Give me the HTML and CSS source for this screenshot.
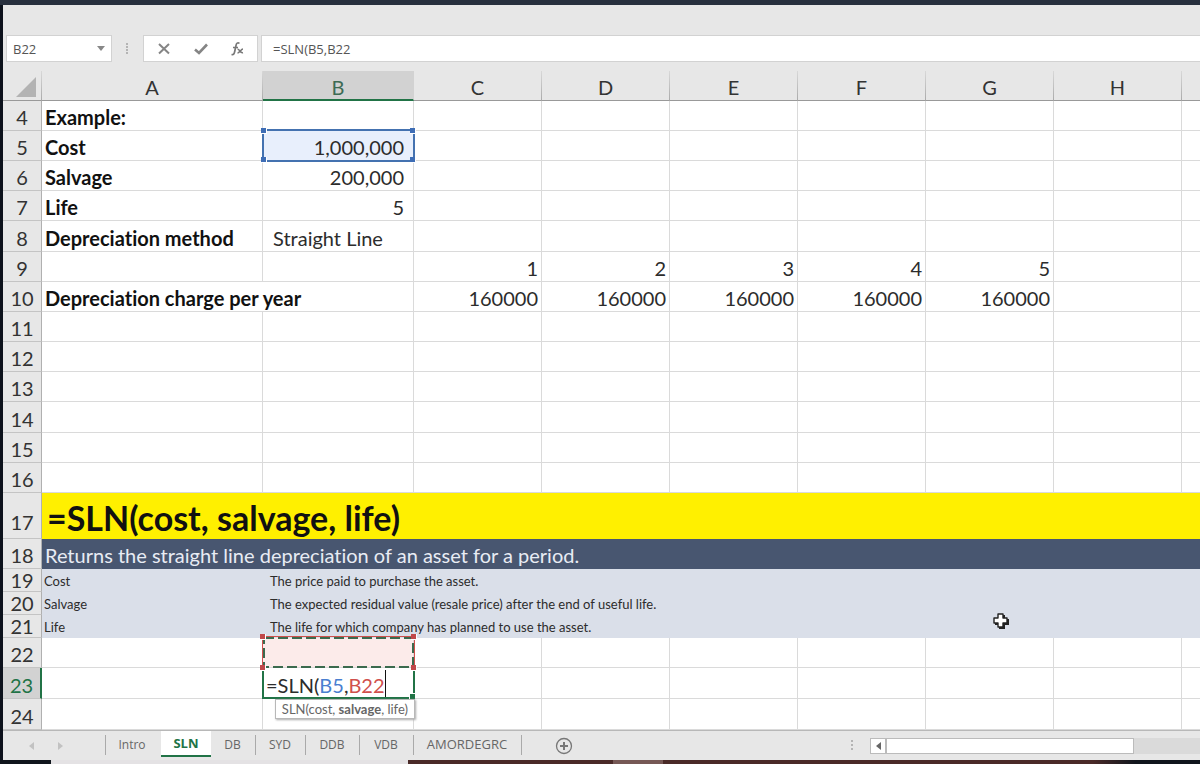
FILE: index.html
```html
<!DOCTYPE html>
<html lang="en">
<head>
<meta charset="utf-8">
<title>SLN worksheet</title>
<link rel="stylesheet" href="styles.css">
</head>
<body>
<div class="app">
  <header class="formula-row">
    <div class="name-box">
      <input class="name-input" type="text" value="B22" aria-label="Name box">
      <button class="name-toggle" type="button" aria-label="Show names"><svg width="8" height="5" viewBox="0 0 8 5"><path d="M0 0h8L4 5z" fill="#888"/></svg></button>
    </div>
    <svg class="grip" width="3" height="12" viewBox="0 0 3 12"><path d="M0 0h2v2H0zM0 3h2v2H0zM0 6h2v2H0zM0 9h2v2H0z" fill="#b4b4b4"/></svg>
    <div class="formula-tools">
      <button type="button" aria-label="Cancel"><svg width="14" height="14" viewBox="0 0 14 14"><path d="M2 2l10 9.500M12 2L2 11.500" stroke="#858585" stroke-width="2" fill="none"/></svg></button>
      <button type="button" aria-label="Enter"><svg width="16" height="14" viewBox="0 0 16 14"><path d="M2 7.500l4 3.500L14 2.500" stroke="#858585" stroke-width="2.600" fill="none"/></svg></button>
      <button type="button" aria-label="Insert function"><svg width="16" height="16" viewBox="0 0 16 16" fill="none" stroke="#777"><path d="M1.500 13.500c2 .5 2.700-.5 3.200-3L6 4.500C6.500 2 7.500 1.500 9.500 2.200M3 6.500h5" stroke-width="1.700"/><path d="M7.500 8.200c2-.7 2.500 4.300 5.500 3.500M13 8c-2 0-3.500 3.900-5.500 3.900" stroke-width="1.500"/></svg></button>
    </div>
    <input class="formula-input" type="text" value="=SLN(B5,B22" aria-label="Formula bar">
  </header>

  <main class="sheet">
    <table class="grid">
      <colgroup><col class="col-num"><col class="col-a"><col class="col-b"><col class="col-n"><col class="col-n"><col class="col-n"><col class="col-n"><col class="col-n"><col class="col-n"><col></colgroup>
      <thead>
        <tr><th class="corner"><svg width="22" height="22" viewBox="0 0 22 22"><path d="M21 1v20H1z" fill="#b3b3b3"/></svg></th><th>A</th><th class="current">B</th><th>C</th><th>D</th><th>E</th><th>F</th><th>G</th><th>H</th><th></th></tr>
      </thead>
      <tbody>
        <tr><th>4</th><td class="bold">Example:</td><td></td><td></td><td></td><td></td><td></td><td></td><td></td><td></td></tr>
        <tr><th>5</th><td class="bold">Cost</td><td class="money ref-blue">1,000,000<span class="frame frame-blue"><i></i><i></i><i></i><i></i></span></td><td></td><td></td><td></td><td></td><td></td><td></td><td></td></tr>
        <tr><th>6</th><td class="bold">Salvage</td><td class="money">200,000</td><td></td><td></td><td></td><td></td><td></td><td></td><td></td></tr>
        <tr><th>7</th><td class="bold">Life</td><td class="money">5</td><td></td><td></td><td></td><td></td><td></td><td></td><td></td></tr>
        <tr class="tall"><th>8</th><td class="bold">Depreciation method</td><td class="indent">Straight Line</td><td></td><td></td><td></td><td></td><td></td><td></td><td></td></tr>
        <tr><th>9</th><td></td><td></td><td class="num">1</td><td class="num">2</td><td class="num">3</td><td class="num">4</td><td class="num">5</td><td></td><td></td></tr>
        <tr><th>10</th><td class="bold" colspan="2">Depreciation charge per year</td><td class="num">160000</td><td class="num">160000</td><td class="num">160000</td><td class="num">160000</td><td class="num">160000</td><td></td><td></td></tr>
        <tr><th>11</th><td></td><td></td><td></td><td></td><td></td><td></td><td></td><td></td><td></td></tr>
        <tr><th>12</th><td></td><td></td><td></td><td></td><td></td><td></td><td></td><td></td><td></td></tr>
        <tr><th>13</th><td></td><td></td><td></td><td></td><td></td><td></td><td></td><td></td><td></td></tr>
        <tr class="tall"><th>14</th><td></td><td></td><td></td><td></td><td></td><td></td><td></td><td></td><td></td></tr>
        <tr><th>15</th><td></td><td></td><td></td><td></td><td></td><td></td><td></td><td></td><td></td></tr>
        <tr><th>16</th><td></td><td></td><td></td><td></td><td></td><td></td><td></td><td></td><td></td></tr>
        <tr class="banner"><th>17</th><td colspan="9">=SLN(cost, salvage, life)</td></tr>
        <tr class="summary"><th>18</th><td colspan="9">Returns the straight line depreciation of an asset for a period.</td></tr>
        <tr class="note"><th>19</th><td>Cost</td><td colspan="8">The price paid to purchase the asset.</td></tr>
        <tr class="note"><th>20</th><td>Salvage</td><td colspan="8">The expected residual value (resale price) after the end of useful life.</td></tr>
        <tr class="note"><th>21</th><td>Life</td><td colspan="8">The life for which company has planned to use the asset.</td></tr>
        <tr><th>22</th><td></td><td class="ref-red"><span class="frame frame-red"><svg class="ants" width="100%" height="100%"><rect x="1" y="1" width="100%" height="100%" fill="none"/></svg><i></i><i></i><i></i><i></i></span></td><td></td><td></td><td></td><td></td><td></td><td></td><td></td></tr>
        <tr class="tall"><th class="current-row">23</th><td></td><td class="editing">=SLN(<span class="blue">B5</span>,<span class="red">B22</span><span class="caret"></span><span class="edit-frame"></span><span class="hint">SLN(cost, <b>salvage</b>, life)</span></td><td></td><td></td><td></td><td></td><td></td><td></td><td></td></tr>
        <tr class="tall"><th>24</th><td></td><td></td><td></td><td></td><td></td><td></td><td></td><td></td><td></td></tr>
      </tbody>
    </table>
    <svg class="pointer" width="18" height="18" viewBox="0 0 18 18"><path d="M7 3h6v4h4v6h-4v4H7v-4H3V7h4z" fill="#222"/><path d="M6 2h5v4h4v5h-4v4H6v-4H2V6h4z" fill="#fff" stroke="#222" stroke-width="1.400" stroke-linejoin="round"/></svg>
  </main>

  <footer class="bottom-bar">
    <div class="tab-nav">
      <button type="button" aria-label="Previous sheet"><svg width="5" height="8" viewBox="0 0 5 8"><path d="M5 0v8L0 4z" fill="#c2c2c2"/></svg></button>
      <button type="button" aria-label="Next sheet"><svg width="5" height="8" viewBox="0 0 5 8"><path d="M0 0v8l5-4z" fill="#c2c2c2"/></svg></button>
    </div>
    <nav class="tabs">
      <button class="tab w-first" type="button">Intro</button>
      <button class="tab active" type="button">SLN</button>
      <button class="tab short" type="button">DB</button>
      <button class="tab" type="button">SYD</button>
      <button class="tab wide" type="button">DDB</button>
      <button class="tab wide" type="button">VDB</button>
      <button class="tab widest" type="button">AMORDEGRC</button>
    </nav>
    <button class="add-sheet" type="button" aria-label="New sheet"><svg width="18" height="18" viewBox="0 0 18 18" fill="none" stroke="#777"><circle cx="9" cy="9" r="7.500" stroke-width="1.300"/><path d="M9 5v8M5 9h8" stroke-width="2"/></svg></button>
    <div class="scroll-area">
      <svg class="grip" width="3" height="12" viewBox="0 0 3 12"><path d="M0 0h2v2H0zM0 4h2v2H0zM0 8h2v2H0z" fill="#b4b4b4"/></svg>
      <div class="scrollbar">
        <button class="scroll-left" type="button" aria-label="Scroll left"><svg width="5" height="8" viewBox="0 0 5 8"><path d="M5 0v8L0 4z" fill="#666"/></svg></button>
        <div class="thumb"></div>
      </div>
    </div>
  </footer>
  <div class="taskbar"><span class="task-dark"></span><span class="task-light"></span><span class="task-brown"></span><span class="task-active"></span><span class="task-rest"></span></div>
</div>
</body>
</html>
```
FILE: styles.css
```css
* { box-sizing: border-box; }

body {
  margin: 0;
  background: #0c111b;
  color: #2c2c2c;
  font-family: Lato, "Open Sans", sans-serif;
  font-size: 20px;
  font-variant-ligatures: none;
  overflow: hidden;
}

button, input {
  margin: 0;
  padding: 0;
  border: 0;
  background: none;
  color: inherit;
  font-family: inherit;
}

button { display: flex; align-items: center; justify-content: center; }
svg { display: block; }

.app {
  display: flex;
  flex-direction: column;
  min-height: 100vh;
  border-top: 5px solid #28303e;
}

/* Formula bar */
.formula-row {
  display: flex;
  align-items: center;
  margin-left: 3px;
  padding: 30px 0 9px 3px;
  background: #e7e7e7;
  color: #555;
}

.name-box, .formula-tools, .formula-input {
  height: 27px;
  border: 1px solid #d2d2d2;
  background: #fff;
}

.name-box { display: flex; width: 106px; }

.name-input, .formula-input {
  font-family: "Open Sans", sans-serif;
  font-size: 13px;
}

.name-input { flex: 1; min-width: 0; padding-left: 6px; }
.name-toggle { width: 20px; }
.formula-row .grip { margin: 0 14px; }
.formula-tools { display: flex; width: 115px; padding: 0 1px; }
.formula-tools button { flex: 1; }
.formula-input { flex: 1; min-width: 0; margin-left: 3px; padding-left: 11px; border-right: 0; }

/* Worksheet grid */
.sheet {
  position: relative;
  flex: 1;
  margin-left: 3px;
  background: #fff;
  border-bottom: 1px solid #b8b8b8;
}

.grid {
  width: 100%;
  table-layout: fixed;
  border-collapse: separate;
  border-spacing: 0;
}

.col-num { width: 39px; }
.col-a { width: 221px; }
.col-b { width: 151px; }
.col-n { width: 128px; }

.grid tr { height: 30px; }

.grid th {
  padding: 0;
  background: #e7e7e7;
  border-right: 1px solid #b0b0b0;
  border-bottom: 1px solid #c4c4c4;
  color: #333;
  font-weight: 400;
  line-height: 26px;
  vertical-align: bottom;
}

.grid thead th {
  border-right-color: transparent;
  border-bottom-color: #999;
  background: linear-gradient(#d8d8d8, #aaa) right / 1px 100% no-repeat border-box #e7e7e7;
}

.grid thead th:last-child { border-right: 0; background: #e7e7e7; }

.grid thead th.current {
  border-bottom: 2px solid #217346;
  background: #d2d2d2;
  color: #3d6b54;
  line-height: 24px;
}

.grid thead .corner svg { margin: 0 4px 2px auto; }

.grid th.current-row {
  background: #d2d2d2;
  border-right: 2px solid #217346;
  color: #217346;
}

.grid td {
  position: relative;
  padding: 0 3px;
  border-right: 1px solid #dadada;
  border-bottom: 1px solid #dadada;
  line-height: 26px;
  vertical-align: bottom;
  white-space: nowrap;
}

.grid td:last-child { border-right: 0; }
.grid td.bold { color: #111; font-weight: 700; }
.grid td.money { padding-right: 9px; text-align: right; }
.grid td.num { text-align: right; }
.grid td.indent { padding-left: 10px; }
.grid tr.tall { height: 31px; }

.grid tr.banner { height: 46px; }
.grid .banner th { line-height: 32px; }
.grid .banner td {
  padding-left: 5px;
  border: 0;
  background: #fff000;
  color: #111;
  font-size: 34px;
  font-weight: 700;
  line-height: 43px;
}

.grid .summary td { border: 0; background: #485670; color: #e8ecf4; line-height: 28px; }

.grid tr.note { height: 23px; }
.grid .note th { line-height: 22px; }
.grid .note td {
  padding: 0 2px;
  border: 0;
  background: #dadfe9;
  font-size: 13px;
  line-height: 22px;
}
.grid .note td + td { padding-left: 7px; }

/* Reference frames */
.ref-blue { background: #e8effc; }
.ref-red { background: #fcebea; }

.frame { position: absolute; z-index: 1; inset: -2px -2px -2px -1px; border: 2px solid #4472b0; }
.frame i { position: absolute; width: 6px; height: 6px; background: #3e6db5; border: 1px solid #fff; border-width: 0 1px 1px 0; }
.frame i:nth-of-type(1) { top: -3px; left: -3px; }
.frame i:nth-of-type(2) { top: -3px; right: -3px; }
.frame i:nth-of-type(3) { bottom: -3px; left: -3px; }
.frame i:nth-of-type(4) { bottom: -3px; right: -3px; }
.frame-red { z-index: 2; border: 1px solid #d0504c; border-bottom-color: #fff; }
.frame-red i { background: #c0484a; }
.ants { position: absolute; inset: 0; }
.ants rect { width: calc(100% - 2px); height: calc(100% - 2px); stroke: #3b6a4e; stroke-width: 2; stroke-dasharray: 10 4; }

.blue { color: #4a7fd0; }
.red { color: #d0504c; }
.caret { display: inline-block; width: 1px; height: 28px; background: #111; vertical-align: bottom; }

.edit-frame { position: absolute; z-index: 1; inset: 0 -2px -1px -1px; border: 2px solid #217346; border-top: 0; }
.edit-frame::after { content: ""; position: absolute; right: -2px; bottom: -2px; width: 5px; height: 5px; background: #217346; border: 1px solid #fff; border-width: 1px 0 0 1px; }

.hint {
  position: absolute;
  z-index: 3;
  top: 100%;
  right: -2px;
  margin-top: 1px;
  padding: 0 6px;
  border: 1px solid #b8b8b8;
  background: #fff;
  box-shadow: 1px 1px 2px #aaa;
  color: #666;
  font-size: 13px;
  line-height: 18px;
}

.pointer { position: absolute; left: 989px; top: 541px; }

/* Sheet tabs */
.bottom-bar {
  display: flex;
  align-items: center;
  height: 29px;
  margin-left: 3px;
  background: #e7e7e7;
  color: #666;
}

.tab-nav { display: flex; gap: 24px; width: 102px; padding-left: 26px; }
.tabs { display: flex; align-self: stretch; }

.tab {
  position: relative;
  width: 50px;
  padding: 0 2px 3px 0;
  font-family: "Open Sans", sans-serif;
  font-size: 12px;
}

.tab::after { content: ""; position: absolute; right: 0; top: 4px; width: 1px; height: 20px; background: #aaa; }
.tab.w-first { width: 56px; }
.tab.w-first::after { right: auto; left: 0; }
.tab.active { height: 26px; padding: 0; border-bottom: 2px solid #217346; background: #fff; color: #217346; font-size: 13px; font-weight: 700; }
.tab.active::after { display: none; }
.tab.short { width: 45px; }
.tab.wide { width: 54px; }
.tab.widest { width: 108px; font-size: 13px; }
.add-sheet { margin-left: 33px; }

.scroll-area { display: flex; align-items: center; flex: 0 0 349px; margin-left: auto; }
.scrollbar { display: flex; flex: 1; height: 16px; margin-left: 16px; background: #dadada; }
.scroll-left { width: 16px; border: 1px solid #bbb; background: #fff; }
.thumb { width: 248px; border: 1px solid #bbb; background: #fff; }

/* Strip of the desktop below the window */
.taskbar { display: flex; height: 4px; background: #10151c; }
.task-dark { width: 51px; }
.task-light { width: 357px; background: #e4e2e4; }
.task-brown { width: 205px; background: #4a2a28; }
.task-active { width: 50px; background: #765855; }
.task-rest { flex: 1; background: linear-gradient(90deg, #4a2a28 80%, #10151c 88%); }
```
